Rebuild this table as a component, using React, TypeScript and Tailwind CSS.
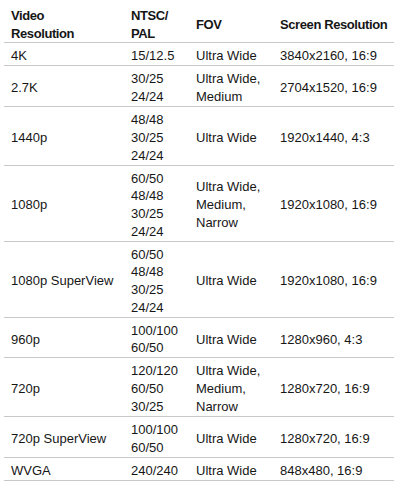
const rows: { res: string; fps: string[]; fov: string[]; screen: string }[] = [
  { res: '4K', fps: ['15/12.5'], fov: ['Ultra Wide'], screen: '3840x2160, 16:9' },
  { res: '2.7K', fps: ['30/25', '24/24'], fov: ['Ultra Wide,', 'Medium'], screen: '2704x1520, 16:9' },
  { res: '1440p', fps: ['48/48', '30/25', '24/24'], fov: ['Ultra Wide'], screen: '1920x1440, 4:3' },
  { res: '1080p', fps: ['60/50', '48/48', '30/25', '24/24'], fov: ['Ultra Wide,', 'Medium,', 'Narrow'], screen: '1920x1080, 16:9' },
  { res: '1080p SuperView', fps: ['60/50', '48/48', '30/25', '24/24'], fov: ['Ultra Wide'], screen: '1920x1080, 16:9' },
  { res: '960p', fps: ['100/100', '60/50'], fov: ['Ultra Wide'], screen: '1280x960, 4:3' },
  { res: '720p', fps: ['120/120', '60/50', '30/25'], fov: ['Ultra Wide,', 'Medium,', 'Narrow'], screen: '1280x720, 16:9' },
  { res: '720p SuperView', fps: ['100/100', '60/50'], fov: ['Ultra Wide'], screen: '1280x720, 16:9' },
  { res: 'WVGA', fps: ['240/240'], fov: ['Ultra Wide'], screen: '848x480, 16:9' },
];

const cols = 'grid grid-cols-[120px_65px_84px_1fr] items-center pl-[7px] border-b border-[#c8c8c8]';

export default function App() {
  return (
    <div className="w-[400px] h-[485px] bg-white font-['Liberation_Sans',Arial,sans-serif] text-[13px] leading-[17.7px] text-[#161616]">
      <div className="ml-[4px] w-[390px]">
        {/* Header */}
        <div className={`${cols} pt-[7px] font-bold tracking-[-0.4px] whitespace-nowrap`}>
          <div>Video<br />Resolution</div>
          <div>NTSC/<br />PAL</div>
          <div>FOV</div>
          <div>Screen Resolution</div>
        </div>

        {rows.map((r) => (
          <div key={r.res} className={`${cols} pt-[4px] pb-[0.3px] whitespace-nowrap`}>
            <div>{r.res}</div>
            <div>
              {r.fps.map((f) => (
                <div key={f}>{f}</div>
              ))}
            </div>
            <div>
              {r.fov.map((f) => (
                <div key={f}>{f}</div>
              ))}
            </div>
            <div>{r.screen}</div>
          </div>
        ))}
      </div>
    </div>
  );
}
